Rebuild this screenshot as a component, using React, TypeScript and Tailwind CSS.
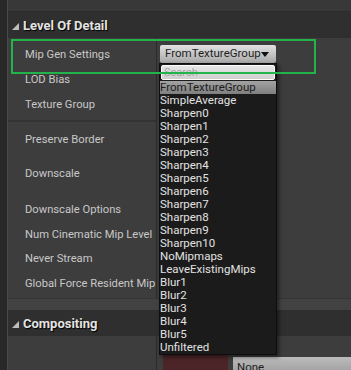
import React from 'react';

const mipOptions = [
  'FromTextureGroup',
  'SimpleAverage',
  'Sharpen0',
  'Sharpen1',
  'Sharpen2',
  'Sharpen3',
  'Sharpen4',
  'Sharpen5',
  'Sharpen6',
  'Sharpen7',
  'Sharpen8',
  'Sharpen9',
  'Sharpen10',
  'NoMipmaps',
  'LeaveExistingMips',
  'Blur1',
  'Blur2',
  'Blur3',
  'Blur4',
  'Blur5',
  'Unfiltered',
];

function Expander() {
  return (
    <svg width="7" height="7" viewBox="0 0 7 7" className="shrink-0">
      <polygon points="7,0 7,7 0,7" fill="#bdbdbd" />
    </svg>
  );
}

function CategoryHeader({ title }: { title: string }) {
  return (
    <div className="flex h-[26px] shrink-0 items-center gap-[4px] bg-[#2f2f2f] pl-[4px] pt-[2px]">
      <Expander />
      <span className="text-[13px] font-bold text-[#e4e4e4] [text-shadow:1px_1px_1px_#000]">{title}</span>
    </div>
  );
}

function Label({ text, className }: { text: string; className: string }) {
  return (
    <div className={`flex h-[24px] shrink-0 items-center overflow-hidden whitespace-nowrap pl-[17px] text-[11.2px] text-[#c8c8c8] ${className}`}>
      {text}
    </div>
  );
}

function MipDropdown() {
  return (
    <div className="absolute left-[159px] top-[63px] flex h-[292px] w-[118px] flex-col border border-[#0e0e0e] bg-[#1b1b1b] shadow-[2px_2px_4px_rgba(0,0,0,0.5)]">
      <div className="mx-[1px] mt-[1px] flex h-[15px] items-center rounded-[2px] border border-white bg-gradient-to-b from-[#e6e6e6] to-[#cfcfcf] pl-[2px] text-[11px] leading-none text-[#a5a5a5]">
        Search
      </div>
      <div className="mt-[1px] flex flex-col">
        {mipOptions.map((opt, i) => (
          <div
            key={opt}
            className={
              i === 0
                ? 'h-[13px] whitespace-nowrap bg-gradient-to-b from-[#a3a3a3] to-[#7f7f7f] text-[11.5px] leading-[13px] text-[#1c1c1c]'
                : 'h-[13px] whitespace-nowrap text-[11.5px] leading-[13px] text-[#e2e2e2]'
            }
          >
            {opt}
          </div>
        ))}
      </div>
    </div>
  );
}

export default function App() {
  return (
    <div className="relative flex h-[370px] w-[351px] overflow-hidden bg-[#3d3d3d] font-[Roboto,sans-serif]">
      <div className="w-[8px] shrink-0 border-r border-[#4a4a4a] bg-[#282828]" />
      <div className="flex min-h-0 flex-1 flex-col">
        <div className="h-[12px] shrink-0 border-b border-[#2b2b2b] bg-[#383838]" />
        <CategoryHeader title="Level Of Detail" />

        <div className="flex h-[260px] shrink-0">
          <div className="flex w-[148px] flex-col">
            <Label text="Mip Gen Settings" className="mt-[5px]" />
            <Label text="LOD Bias" className="mt-[1px]" />
            <Label text="Texture Group" className="mt-[1px]" />
            <div className="mt-[3px] h-[2px] shrink-0 bg-[#333333]" />
            <Label text="Preserve Border" className="mt-[6px]" />
            <Label text="Downscale" className="mt-[10px]" />
            <Label text="Downscale Options" className="mt-[12px]" />
            <Label text="Num Cinematic Mip Level" className="mt-[1px]" />
            <Label text="Never Stream" className="mt-[0px]" />
            <Label text="Global Force Resident Mip" className="mt-[1px]" />
          </div>
          <div className="w-[1px] bg-[#2b2b2b]" />
          <div className="flex flex-1 flex-col">
            <div className="ml-[3px] mt-[7px] flex h-[18px] w-[116px] items-center justify-between rounded-[2px] bg-gradient-to-b from-[#e2e2e2] to-[#a8a8a8] pl-[5px] pr-[7px] text-[11.5px] text-[#1e1e1e]">
              <span>FromTextureGroup</span>
              <svg width="8" height="5" viewBox="0 0 8 5">
                <polygon points="0,0 8,0 4,5" fill="#111" />
              </svg>
            </div>
          </div>
        </div>

        <div className="h-[12px] shrink-0 border-t border-[#353535] bg-[#424242]" />
        <CategoryHeader title="Compositing" />

        <div className="flex min-h-0 flex-1 overflow-hidden">
          <div className="w-[148px]" />
          <div className="w-[1px] bg-[#2b2b2b]" />
          <div className="flex flex-1 items-start">
            <div className="ml-[6px] mt-[17px] h-[20px] w-[65px] bg-[#4b2527]" />
            <div className="ml-[5px] mt-[21px] flex h-[18px] flex-1 items-start bg-gradient-to-b from-[#bcbcbc] to-[#9c9c9c] pl-[4px] pt-[3px] text-[11.5px] leading-[14px] text-[#1e1e1e]">
              None
            </div>
          </div>
        </div>
      </div>

      <MipDropdown />
      <div className="pointer-events-none absolute left-[11px] top-[39px] h-[35px] w-[305px] border-2 border-[#22b34a]" />
    </div>
  );
}
